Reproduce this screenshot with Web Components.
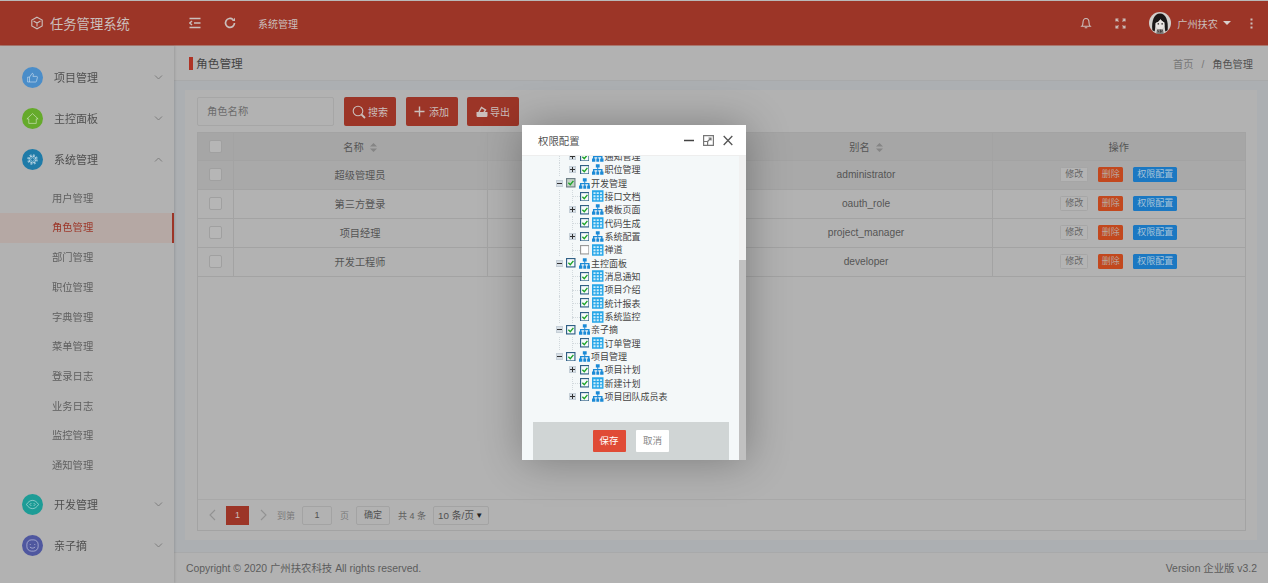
<!DOCTYPE html>
<html lang="zh-CN">
<head>
<meta charset="utf-8">
<title>角色管理</title>
<style>
  html, body { margin: 0; height: 100%; overflow: hidden; }
  body { font: 10px "Liberation Sans", "Noto Sans CJK SC", sans-serif; color: #505050; background: #b2b2b2; }
</style>
</head>
<body>
<app-shell>
  <top-bar slot="top"></top-bar>
  <side-nav slot="side">
    <nav-group label="项目管理" color="#4a8dc9" icon="thumb"></nav-group>
    <nav-group label="主控面板" color="#65aa2b" icon="home"></nav-group>
    <nav-group label="系统管理" color="#1f7ba8" icon="gear" open>
      <nav-item>用户管理</nav-item>
      <nav-item active>角色管理</nav-item>
      <nav-item>部门管理</nav-item>
      <nav-item>职位管理</nav-item>
      <nav-item>字典管理</nav-item>
      <nav-item>菜单管理</nav-item>
      <nav-item>登录日志</nav-item>
      <nav-item>业务日志</nav-item>
      <nav-item>监控管理</nav-item>
      <nav-item>通知管理</nav-item>
    </nav-group>
    <nav-group label="开发管理" color="#1d9c96" icon="code"></nav-group>
    <nav-group label="亲子摘" color="#4f579f" icon="smile"></nav-group>
  </side-nav>
  <role-page slot="main"></role-page>
  <perm-modal slot="modal">
    <tree-row level="1" kind="folder" sw="plus" guide>通知管理</tree-row>
    <tree-row level="1" kind="folder" sw="plus" guide>职位管理</tree-row>
    <tree-row level="0" kind="folder" sw="minus" partial>开发管理</tree-row>
    <tree-row level="1" kind="leaf" guide>接口文档</tree-row>
    <tree-row level="1" kind="folder" sw="plus" guide>模板页面</tree-row>
    <tree-row level="1" kind="leaf" guide>代码生成</tree-row>
    <tree-row level="1" kind="folder" sw="plus" guide>系统配置</tree-row>
    <tree-row level="1" kind="leaf" guide unchecked>禅道</tree-row>
    <tree-row level="0" kind="folder" sw="minus">主控面板</tree-row>
    <tree-row level="1" kind="leaf" guide>消息通知</tree-row>
    <tree-row level="1" kind="leaf" guide>项目介绍</tree-row>
    <tree-row level="1" kind="leaf" guide>统计报表</tree-row>
    <tree-row level="1" kind="leaf" guide>系统监控</tree-row>
    <tree-row level="0" kind="folder" sw="minus">亲子摘</tree-row>
    <tree-row level="1" kind="leaf" guide>订单管理</tree-row>
    <tree-row level="0" kind="folder" sw="minus">项目管理</tree-row>
    <tree-row level="1" kind="folder" sw="plus">项目计划</tree-row>
    <tree-row level="1" kind="leaf">新建计划</tree-row>
    <tree-row level="1" kind="folder" sw="plus">项目团队成员表</tree-row>
  </perm-modal>
</app-shell>

<script>
// icons for the round badges in the side menu
const NAV_ICONS = {
  thumb: '<path d="M3.5 9.5H6V16H3.500zM6 9.500 9.500 4.500c1.300 0 1.800 1 1.500 2.200L10.500 8.500H15.500c.8 0 1.200.7 1 1.500l-1.200 5c-.2.600-.6 1-1.200 1H6"/>',
  home: '<path d="M2.500 10.500 10 3.500l7.500 7H15V16.500H5V10.500z"/>',
  gear: '<circle cx="10" cy="10" r="2.500"/><circle cx="10" cy="10" r="5.500" stroke-width="3.200" stroke-dasharray="2.400 1.920"/><circle cx="10" cy="10" r="4.500"/>',
  code: '<path d="M2 10c2-3.500 5-5.500 8-5.500s6 2 8 5.500c-2 3.500-5 5.500-8 5.500s-6-2-8-5.500z"/><path d="M8.500 8 6.500 10l2 2M11.500 8l2 2-2 2"/>',
  smile: '<rect x="2.500" y="2.500" width="15" height="15" rx="6"/><path d="M7 8v1.300M13 8v1.300M6.500 12c2 2 5 2 7 0"/>'
};

const shellTemplate = document.createElement("template");
shellTemplate.innerHTML = `
  <style>
    :host { display: grid; grid-template: 46px 537px / 174px 1fr; width: 100vw; height: 583px; overflow: hidden; filter: blur(.3px); }
    ::slotted([slot="top"]) { grid-column: 1 / 3; }
  </style>
  <slot name="top"></slot>
  <slot name="side"></slot>
  <slot name="main"></slot>
  <slot name="modal"></slot>
`;
class AppShell extends HTMLElement {
  constructor() {
    super();
    this.attachShadow({ mode: "open" }).append(shellTemplate.content.cloneNode(true));
  }
}
customElements.define("app-shell", AppShell);

const topTemplate = document.createElement("template");
topTemplate.innerHTML = `
  <style>
    :host { display: flex; align-items: center; box-sizing: border-box; height: 46px; background: #9c3527; border-top: 1px solid #b9b9b9; border-bottom: 1px solid #a9766d; color: #cbbfbc; }
    svg { display: block; fill: none; stroke: currentColor; stroke-width: 1.1; }
    .logo { display: flex; align-items: center; width: 174px; padding-left: 30px; box-sizing: border-box; gap: 6px; font-size: 13.3px; }
    .tools { display: flex; align-items: center; padding-left: 15px; flex: 1; }
    .crumb { margin-left: 22px; font-size: 10px; }
    .right { display: flex; align-items: center; padding-right: 15px; }
    .name { margin-left: 6px; font-size: 10.2px; }
    .caret { width: 0; height: 0; margin-left: 5px; border-top: 4px solid #d8d0ce; border-left: 4.5px solid transparent; border-right: 4.5px solid transparent; }
  </style>
  <div class="logo">
    <svg width="14" height="14" viewBox="0 0 14 14"><path d="M7 1.200 12.200 4v6L7 12.800 1.800 10V4zM3.500 5 7 7l3.500-2M7 7v3.500"/></svg>
    <span>任务管理系统</span>
  </div>
  <div class="tools">
    <svg width="12" height="12" viewBox="0 0 12 12"><path d="M.5 1.500h11M5 6h6.500M.5 10.500h11M3 4 .8 6 3 8" stroke-width="1.500"/></svg>
    <svg style="margin-left:23px" width="12" height="12" viewBox="0 0 12 12"><path d="M10.500 6A4.500 4.500 0 1 1 9 2.600" stroke-width="1.700"/><path d="M11 .8V4H7.800z" fill="currentColor" stroke="none"/></svg>
    <span class="crumb">系统管理</span>
  </div>
  <div class="right">
    <svg width="12" height="12" viewBox="0 0 12 12"><path d="M1.800 9.200c1-.9 1.200-1.700 1.200-3.700C3 3.300 4.200 1.500 6 1.500s3 1.800 3 4c0 2 .2 2.800 1.200 3.700zM4.700 10.800h2.600"/></svg>
    <svg style="margin-left:23px" width="11" height="11" viewBox="0 0 11 11"><path d="M1 3.500V1h2.500M1 1l2.500 2.500M10 3.500V1H7.500M10 1 7.500 3.500M1 7.500V10h2.500M1 10l2.500-2.500M10 7.500V10H7.500M10 10 7.500 7.500"/></svg>
    <svg style="margin-left:23px" width="22" height="22" viewBox="0 0 23 23">
      <circle cx="11.500" cy="11.500" r="11.500" fill="#d2cfcc" stroke="none"/>
      <path d="M3.500 19C2.500 9 5.500 1.500 11.500 1.500S20.500 9 19.500 19l-2.500 1.500-1-9.500c-2-1-3-2-4-3.500-1.500 2.500-3.500 3.500-5 4L6 20.500z" fill="#191717" stroke="none"/>
      <path d="M7 11.500c1.500-.5 3.500-1.500 5-4 1 1.500 2 2.500 4 3.500v3c0 2.500-2 4-4.500 4S7 16.500 7 14z" fill="#e8e4e1" stroke="none"/>
      <path d="M9 12.500h1.500M13 12.500h1.500" stroke="#1b1919" stroke-width="1.300"/>
      <path d="M7.500 23l1-5h6l1 5z" fill="#7d7876" stroke="none"/>
      <path d="M9 19l1 2M12 18.500v3M14 19l-1 2" stroke="#2b2929" stroke-width=".8"/>
    </svg>
    <span class="name">广州扶农</span>
    <span class="caret"></span>
    <svg style="margin-left:19px" width="3" height="11" viewBox="0 0 3 11"><path d="M.5.500h2v2h-2zM.5 4.500h2v2h-2zM.5 8.500h2v2h-2z" fill="currentColor" stroke="none"/></svg>
  </div>
`;
class TopBar extends HTMLElement {
  constructor() {
    super();
    this.attachShadow({ mode: "open" }).append(topTemplate.content.cloneNode(true));
  }
}
customElements.define("top-bar", TopBar);

const sideTemplate = document.createElement("template");
sideTemplate.innerHTML = `
  <style>
    :host { display: block; box-sizing: border-box; padding-top: 10.5px; background: #b2b2b2; box-shadow: 1px 0 2px rgba(0,0,0,.12); position: relative; height: 537px; overflow: hidden; }
  </style>
  <slot></slot>
`;
class SideNav extends HTMLElement {
  constructor() {
    super();
    this.attachShadow({ mode: "open" }).append(sideTemplate.content.cloneNode(true));
  }
}
customElements.define("side-nav", SideNav);

// one top level entry of the side menu, children are shown when "open" is set
class NavGroup extends HTMLElement {
  constructor() {
    super();
    const open = this.hasAttribute("open");
    const arrow = open ? "M1 5.500 4.500 2 8 5.500" : "M1 1.500 4.500 5 8 1.500";
    this.attachShadow({ mode: "open" }).innerHTML = `
      <style>
        :host { display: block; }
        .head { display: flex; align-items: center; height: 41px; padding-left: 22px; color: #505050; font-size: 11px; }
        .badge { display: flex; align-items: center; justify-content: center; flex: none; width: 21px; height: 21px; border-radius: 50%; background: ${this.getAttribute("color")}; }
        .badge svg { fill: none; stroke: rgba(255,255,255,.5); stroke-width: 1.2; }
        .label { margin-left: 11px; flex: 1; }
        .arrow { margin-right: 11px; fill: none; stroke: #7d7d7d; stroke-width: 1; }
        .kids { padding: 4.3px 0 3.3px; display: ${open ? "block" : "none"}; }
      </style>
      <div class="head">
        <span class="badge"><svg width="15" height="15" viewBox="0 0 20 20">${NAV_ICONS[this.getAttribute("icon")]}</svg></span>
        <span class="label">${this.getAttribute("label")}</span>
        <svg class="arrow" width="9" height="7" viewBox="0 0 9 7"><path d="${arrow}"/></svg>
      </div>
      <div class="kids"><slot></slot></div>
    `;
  }
}
customElements.define("nav-group", NavGroup);

const navItemTemplate = document.createElement("template");
navItemTemplate.innerHTML = `
  <style>
    :host { display: block; box-sizing: border-box; height: 29.7px; line-height: 29.7px; padding-left: 52px; color: #606060; font-size: 10.3px; }
    :host([active]) { background: #b5a8a4; color: #9c3527; border-right: 2px solid #9c3527; }
  </style>
  <slot></slot>
`;
class NavItem extends HTMLElement {
  constructor() {
    super();
    this.attachShadow({ mode: "open" }).append(navItemTemplate.content.cloneNode(true));
  }
}
customElements.define("nav-item", NavItem);

const pageTemplate = document.createElement("template");
pageTemplate.innerHTML = `
  <style>
    :host { display: flex; flex-direction: column; height: 537px; background: #acafb2; }
    .title { display: flex; align-items: center; justify-content: space-between; flex: none; height: 35px; padding: 0 15px; background: #b2b2b2; border-bottom: 1px solid #a8a9aa; box-sizing: border-box; }
    .title h1 { margin: 0; font-size: 11.7px; font-weight: 400; color: #444; border-left: 4px solid #ae3325; padding-left: 3px; line-height: 13px; }
    .path { font-size: 10.2px; color: #777; }
    .path b { font-weight: 400; color: #505050; }
    .path i { font-style: normal; margin: 0 8px; }
    .card { flex: 1; margin: 9px 11px 12px; padding: 7px 11px 9px 12px; background: #b2b2b2; display: flex; flex-direction: column; min-height: 0; }
    .tools { display: flex; flex: none; height: 29px; margin-bottom: 6px; }
    .tools input { box-sizing: border-box; width: 137px; height: 29px; margin: 0 10px 0 0; padding: 0 9px; border: 1px solid #a6a6a6; border-radius: 2px; background: #b2b2b2; font: inherit; font-size: 10.3px; outline: 0; }
    .tools input::placeholder { color: #6c6c6c; opacity: 1; }
    .btn { display: flex; align-items: center; justify-content: center; gap: 2px; box-sizing: border-box; width: 52px; height: 29px; margin-right: 9.5px; border-radius: 2px; background: #9c3527; color: #cbbfbc; font-size: 10px; }
    .btn svg { fill: none; stroke: currentColor; stroke-width: 1.1; }
    .wrap { flex: 1; display: flex; flex-direction: column; min-height: 0; border: 1px solid #a3a3a3; }
    .grid { flex: 1; min-height: 0; }
    table { width: 100%; border-collapse: collapse; table-layout: fixed; }
    th, td { height: 29px; padding: 0; box-sizing: border-box; border-bottom: 1px solid #a3a3a3; border-right: 1px solid #a3a3a3; text-align: center; font-size: 10.2px; font-weight: 400; color: #555; }
    tr > :last-child { border-right: 0; }
    thead th { background: #a6a6a6; height: 27px; }
    tr.hover td { background: #a9a9a9; }
    .check { display: block; width: 13px; height: 13px; margin: auto; box-sizing: border-box; border: 1px solid #a0a0a0; background: #b6b6b6; border-radius: 2px; }
    .sort { display: inline-block; vertical-align: -1px; margin-left: 6px; fill: #858585; }
    .ops { display: flex; justify-content: center; gap: 10px; align-items: center; }
    .op { box-sizing: border-box; height: 15.5px; line-height: 15px; border-radius: 1.5px; font-size: 9px; }
    .edit { width: 28px; border: 1px solid #a6a6a6; color: #666; background: #b4b4b4; line-height: 13.5px; }
    .del { width: 25px; background: #c2481e; color: #b9a79f; }
    .perm { width: 44px; background: #1b78c2; color: #a9c4d9; }
    .pager { display: flex; flex: none; align-items: center; box-sizing: border-box; height: 31px; border-top: 1px solid #a8a8a8; color: #7a7a7a; font-size: 9px; padding-left: 11px; }
    .pager svg { fill: none; stroke: #929292; stroke-width: 1.1; }
    .cur { width: 23px; height: 19px; line-height: 19px; text-align: center; background: #9c3527; color: #cbbfbc; margin: 0 10px; }
    .box { box-sizing: border-box; height: 19px; line-height: 17px; text-align: center; border: 1px solid #a3a3a3; border-radius: 2px; color: #505050; }
    .sel { display: flex; align-items: center; justify-content: space-between; padding: 0 5px 0 4px; font-size: 9.8px; }
  </style>
  <div class="title">
    <h1>角色管理</h1>
    <div class="path">首页<i>/</i><b>角色管理</b></div>
  </div>
  <div class="card">
    <div class="tools">
      <input placeholder="角色名称">
      <div class="btn"><svg width="14" height="14" viewBox="0 0 14 14"><circle cx="6" cy="6" r="4.800"/><path d="M9.500 9.500 13 13" stroke-width="1.800"/></svg>搜索</div>
      <div class="btn" style="gap:4px"><svg width="11" height="11" viewBox="0 0 11 11"><path d="M5.500.5v10M.5 5.500h10" stroke-width="1.400"/></svg>添加</div>
      <div class="btn"><svg width="12" height="12" viewBox="0 0 12 12"><path d="M.5 6H11.500V9.500C11.500 10.600 10.800 11 10 11H2C1.200 11 .5 10.600 .5 9.500z" fill="currentColor" stroke="none"/><path d="M3 6 5.500 1.500 9.500 4 8 6" stroke-width="1.400"/></svg>导出</div>
    </div>
    <div class="wrap">
      <div class="grid">
        <table>
          <colgroup><col style="width:35px"><col style="width:254px"><col style="width:253px"><col style="width:252px"><col></colgroup>
          <thead><tr>
            <th><span class="check"></span></th>
            <th>名称<svg class="sort" width="7" height="9" viewBox="0 0 7 9"><path d="M3.500 0 7 3.500H0zM0 5.500h7L3.500 9z"/></svg></th>
            <th></th>
            <th>别名<svg class="sort" width="7" height="9" viewBox="0 0 7 9"><path d="M3.500 0 7 3.500H0zM0 5.500h7L3.500 9z"/></svg></th>
            <th>操作</th>
          </tr></thead>
          <tbody id="rows"></tbody>
        </table>
      </div>
      <div class="pager">
        <svg width="7" height="12" viewBox="0 0 7 12"><path d="M6 1 1 6l5 5"/></svg>
        <span class="cur" style="margin-left:10px">1</span>
        <svg width="7" height="12" viewBox="0 0 7 12" style="margin-left:1px"><path d="M1 1l5 5-5 5"/></svg>
        <span style="margin-left:10px">到第</span>
        <span class="box" style="width:30px;margin:0 8px 0 7px">1</span>
        <span>页</span>
        <span class="box" style="width:34px;margin:0 8px 0 7px">确定</span>
        <span style="color:#606060">共 4 条</span>
        <span class="box sel" style="width:56px;margin-left:7px"><span>10 条/页</span><span style="font-size:8px;color:#222">▼</span></span>
      </div>
    </div>
  </div>
  <app-footer></app-footer>
`;
const ROLES = [
  ["超级管理员", "administrator"],
  ["第三方登录", "oauth_role"],
  ["项目经理", "project_manager"],
  ["开发工程师", "developer"]
];
class RolePage extends HTMLElement {
  constructor() {
    super();
    const shadow = this.attachShadow({ mode: "open" });
    shadow.append(pageTemplate.content.cloneNode(true));
    shadow.getElementById("rows").innerHTML = ROLES.map((r, i) => `
      <tr class="${i === 0 ? "hover" : ""}">
        <td><span class="check"></span></td>
        <td>${r[0]}</td>
        <td></td>
        <td>${r[1]}</td>
        <td><div class="ops"><span class="op edit">修改</span><span class="op del">删除</span><span class="op perm">权限配置</span></div></td>
      </tr>`).join("");
  }
}
customElements.define("role-page", RolePage);

const footTemplate = document.createElement("template");
footTemplate.innerHTML = `
  <style>
    :host { display: flex; flex: none; align-items: center; justify-content: space-between; box-sizing: border-box; height: 31px; padding: 0 11px 2px 12px; background: #b2b2b2; border-top: 1px solid #a8a9aa; color: #5c5c5c; font-size: 10.4px; }
  </style>
  <span>Copyright © 2020 广州扶农科技 All rights reserved.</span>
  <span>Version 企业版 v3.2</span>
`;
class AppFooter extends HTMLElement {
  constructor() {
    super();
    this.attachShadow({ mode: "open" }).append(footTemplate.content.cloneNode(true));
  }
}
customElements.define("app-footer", AppFooter);

const modalTemplate = document.createElement("template");
modalTemplate.innerHTML = `
  <style>
    :host { position: fixed; left: 522px; top: 125px; width: 224px; height: 335px; display: flex; flex-direction: column; background: #f4f8f9; box-shadow: 1px 1px 40px rgba(0,0,0,.3); }
    .head { display: flex; align-items: center; flex: none; box-sizing: border-box; height: 31px; padding: 0 13px 0 16px; background: #fff; border-bottom: 1px solid #eee; color: #555; font-size: 10.4px; }
    .head span { flex: 1; }
    .head svg { fill: none; stroke: #444; stroke-width: 1.2; margin-left: 9px; display: block; }
    .body { flex: 1; display: flex; min-height: 0; }
    .main { flex: 1; display: flex; flex-direction: column; min-width: 0; }
    .tree { flex: 1; min-height: 0; overflow: hidden; padding-left: 30.5px; }
    .list { margin-top: -6.3px; }
    .foot { display: flex; justify-content: center; align-items: center; gap: 10.5px; flex: none; height: 38px; margin: 0 10.5px 0 11px; background: #d0d5d5; }
    .foot span { width: 33px; height: 22px; line-height: 22px; text-align: center; font-size: 9.5px; border-radius: 1px; margin-bottom: 1px; }
    .save { background: #e04b36; color: #fff; }
    .cancel { background: #fff; color: #888; }
    .bar { flex: none; width: 7px; background: #f1f1f1; display: flex; flex-direction: column; justify-content: flex-end; }
    .thumb { height: 200px; background: #c1c1c1; }
  </style>
  <div class="head">
    <span>权限配置</span>
    <svg width="10" height="11" viewBox="0 0 10 11"><path d="M0 5.500h10" stroke-width="1.500"/></svg>
    <svg width="11" height="11" viewBox="0 0 11 11"><path d="M.6.600h9.800v9.800H.6z" stroke="#777"/><path d="M.6 6.500h4v4M4.600 6.500 7.500 3.500M5.500 3h2.500v2.500" stroke="#777"/></svg>
    <svg width="10" height="11" viewBox="0 0 10 11"><path d="M.7 1l8.600 9M9.300 1 .7 10" stroke-width="1.300" stroke="#555"/></svg>
  </div>
  <div class="body">
    <div class="main">
      <div class="tree"><div class="list"><slot></slot></div></div>
      <div class="foot"><span class="save">保存</span><span class="cancel">取消</span></div>
    </div>
    <div class="bar"><div class="thumb"></div></div>
  </div>
`;
class PermModal extends HTMLElement {
  constructor() {
    super();
    this.attachShadow({ mode: "open" }).append(modalTemplate.content.cloneNode(true));
  }
}
customElements.define("perm-modal", PermModal);

const FOLDER_ICON = '<svg class="ico" width="11.500" height="11" viewBox="0 0 12 11"><path fill="#1b8ad6" d="M4 0h4v3.500H6.500V5H11v2.500h1V11H8.500V7.500h1V6.200h-3v1.300h1V11h-3V7.500h1V6.200h-3v1.300h1V11H0V7.500h1V5h4.500V3.500H4z"/></svg>';
const LEAF_ICON = '<svg class="ico" width="11.500" height="12" viewBox="0 0 12 12"><rect width="12" height="12" fill="#27a6e8"/><path fill="#cdeefb" d="M1.500 2h2.200v2H1.500zM4.900 2h2.200v2H4.900zM8.300 2h2.200v2H8.300zM1.500 5.200h2.200v2H1.500zM4.900 5.200h2.200v2H4.900zM8.300 5.200h2.200v2H8.300zM1.500 8.400h2.200v2H1.500zM4.900 8.400h2.200v2H4.900zM8.300 8.400h2.200v2H8.300z"/></svg>';

// a row of the permission tree, in the look of a zTree checkbox tree
class TreeRow extends HTMLElement {
  constructor() {
    super();
    const level = Number(this.getAttribute("level"));
    const sw = this.getAttribute("sw");
    const folder = this.getAttribute("kind") === "folder";
    const checked = !this.hasAttribute("unchecked");
    const partial = this.hasAttribute("partial");
    let cells = "";
    if (level === 1) cells += `<span class="cell ${this.hasAttribute("guide") ? "vline" : ""}"></span>`;
    if (sw) {
      cells += `<span class="cell"><span class="sw"><i></i>${sw === "plus" ? "<b></b>" : ""}</span></span>`;
    } else {
      cells += `<span class="cell tick"></span>`;
    }
    const stroke = !checked ? "#999" : partial ? "#6f7f86" : "#2f5f85";
    const fill = partial ? "#c3d3c6" : checked ? "#f7fbfc" : "#fff";
    this.attachShadow({ mode: "open" }).innerHTML = `
      <style>
        :host { display: block; height: 13.35px; color: #444; font-size: 9px; }
        .row { display: flex; align-items: center; height: 100%; white-space: nowrap; }
        .cell { position: relative; flex: none; width: 13.5px; height: 100%; display: flex; align-items: center; justify-content: center; }
        .vline::before, .tick::before { content: ""; position: absolute; left: 6px; top: 0; bottom: 0; border-left: 1px dotted #d2d9dd; }
        .tick::after { content: ""; position: absolute; left: 6px; right: 0; top: 50%; border-top: 1px dotted #d2d9dd; }
        .sw { position: relative; width: 7px; height: 7px; box-sizing: border-box; background: #d7dfe6; border: 1px solid #c6d0d8; }
        .sw i { position: absolute; left: 0; right: 0; top: 2px; height: 1px; background: #333; }
        .sw b { position: absolute; left: 2px; top: 0; bottom: 0; width: 1px; background: #333; }
        .box { flex: none; display: block; margin-right: 3px; }
        .ico { flex: none; display: block; margin-right: 1px; }
      </style>
      <div class="row">
        ${cells}
        <svg class="box" width="9.500" height="9.500" viewBox="0 0 10 10">
          <rect x=".6" y=".6" width="8.800" height="8.800" fill="${fill}" stroke="${stroke}" stroke-width="1.200"/>
          ${checked ? '<path d="M2.500 5 4.500 7l3.300-4" fill="none" stroke="#1fa32a" stroke-width="1.500"/>' : ""}
        </svg>
        ${folder ? FOLDER_ICON : LEAF_ICON}
        <span><slot></slot></span>
      </div>
    `;
  }
}
customElements.define("tree-row", TreeRow);
</script>
</body>
</html>
